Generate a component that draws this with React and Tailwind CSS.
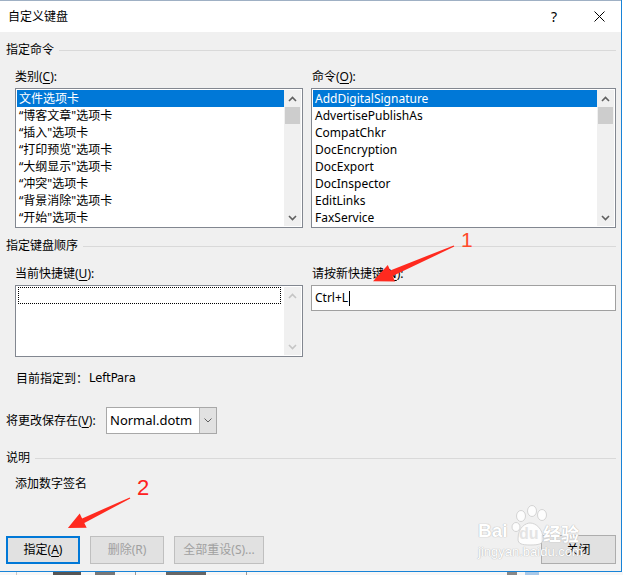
import React from "react";

const FONT = { fontFamily: '"Noto Sans", "Noto Sans CJK SC", sans-serif' };

function Chevron({ dir = "up", color = "#606060" }) {
  return (
    <svg width="9" height="6" viewBox="0 0 9 6">
      <path
        d={dir === "up" ? "M1 5 L4.5 1.5 L8 5" : "M1 1 L4.5 4.5 L8 1"}
        fill="none"
        stroke={color}
        strokeWidth="1.6"
      />
    </svg>
  );
}

function Scrollbar({ thumb, disabled }) {
  const c = disabled ? "#c5c5c5" : "#606060";
  return (
    <div className="w-[17px] h-full bg-[#f0f0f0] flex flex-col shrink-0">
      <div className="h-[17px] flex items-center justify-center">
        <Chevron dir="up" color={c} />
      </div>
      {thumb ? <div className="h-[17px] mx-[1px] bg-[#cdcdcd]" /> : null}
      <div className="flex-1" />
      <div className="h-[17px] flex items-center justify-center">
        <Chevron dir="down" color={c} />
      </div>
    </div>
  );
}

function ListBox({ items, widthClass }) {
  return (
    <div className={"h-[140px] border border-[#828790] bg-white p-[1px] flex " + widthClass}>
      <div className="flex-1 flex flex-col overflow-hidden">
        {items.map((t, i) => (
          <div
            key={i}
            className={
              "h-[17px] leading-[17px] pl-[2px] whitespace-nowrap text-[12px] " +
              (i === 0 ? "bg-[#0078d7] text-white" : "text-black")
            }
          >
            {t}
          </div>
        ))}
      </div>
      <Scrollbar thumb />
    </div>
  );
}

function GroupHeader({ label, className = "" }) {
  return (
    <div className={"flex items-center h-[18px] " + className}>
      <span className="pl-[6px] pr-[5px] leading-[18px] text-[12px] whitespace-nowrap">{label}</span>
      <div className="flex-1 h-px bg-[#d9d9d9] mr-[5px]" />
    </div>
  );
}

const U = ({ children }) => <span className="underline underline-offset-2">{children}</span>;

export default function App() {
  const cats = [
    "文件选项卡",
    "“博客文章\"选项卡",
    "“插入\"选项卡",
    "“打印预览\"选项卡",
    "“大纲显示\"选项卡",
    "“冲突\"选项卡",
    "“背景消除\"选项卡",
    "“开始\"选项卡",
  ];
  const cmds = [
    "AddDigitalSignature",
    "AdvertisePublishAs",
    "CompatChkr",
    "DocEncryption",
    "DocExport",
    "DocInspector",
    "EditLinks",
    "FaxService",
  ];

  return (
    <div className="relative w-[623px] h-[575px] bg-white overflow-hidden text-black" style={FONT}>
      <div className="w-[622px] h-[572px] flex flex-col border-r border-b border-[#1883d7]">
        {/* Title bar */}
        <div className="h-[32px] shrink-0 bg-white border-t border-[#9fb0c4] flex items-center">
          <span className="pl-[8px] text-[12px]">自定义键盘</span>
          <div className="ml-auto flex items-center mr-[16px]">
            <span className="text-[14px] leading-none">?</span>
            <svg className="ml-[37px]" width="11" height="11" viewBox="0 0 11 11">
              <path d="M0.5 0.5 L10.5 10.5 M10.5 0.5 L0.5 10.5" stroke="#000" strokeWidth="1" />
            </svg>
          </div>
        </div>

        {/* Body */}
        <div className="flex-1 bg-[#f0f0f0] flex flex-col pt-[9px]">
          <GroupHeader label="指定命令" />

          <div className="flex mt-[9px] pl-[15px]">
            <div className="w-[288px] flex flex-col">
              <div className="h-[17px] leading-[17px] text-[12px]">
                类别(<U>C</U>):
              </div>
              <div className="mt-[3px]">
                <ListBox items={cats} widthClass="w-[288px]" />
              </div>
            </div>
            <div className="w-[305px] ml-[8px] flex flex-col">
              <div className="h-[17px] leading-[17px] text-[12px] pl-[1px]">
                命令(<U>O</U>):
              </div>
              <div className="mt-[3px]">
                <ListBox items={cmds} widthClass="w-[305px]" />
              </div>
            </div>
          </div>

          <GroupHeader label="指定键盘顺序" className="mt-[9px]" />

          <div className="flex mt-[10px] pl-[15px]">
            <div className="w-[288px] flex flex-col">
              <div className="h-[17px] leading-[17px] text-[12px]">
                当前快捷键(<U>U</U>):
              </div>
              <div className="mt-[3px] h-[72px] border border-[#828790] bg-white p-[1px] flex">
                <div className="flex-1 pr-[3px]">
                  <div className="h-[17px] border border-dotted border-black ml-[1px]" />
                </div>
                <Scrollbar disabled />
              </div>
            </div>
            <div className="w-[305px] ml-[8px] flex flex-col">
              <div className="h-[17px] leading-[17px] text-[12px] pl-[1px]">
                请按新快捷键(<U>N</U>):
              </div>
              <div className="mt-[3px] h-[26px] border border-[#a0a0a0] bg-white flex items-center pl-[3px] text-[12px]">
                <span>Ctrl+L</span>
                <span className="inline-block w-px h-[15px] bg-black ml-[1px]" />
              </div>
            </div>
          </div>

          <div className="mt-[13px] h-[17px] leading-[17px] pl-[16px] text-[12px] flex">
            <span>目前指定到：</span>
            <span className="ml-[1px]" style={{ fontFamily: '"DejaVu Sans", sans-serif', fontSize: "11.5px" }}>
              LeftPara
            </span>
          </div>

          <div className="mt-[20px] flex items-center pl-[6px]">
            <div className="w-[100px] text-[12px] whitespace-nowrap">
              将更改保存在(<U>V</U>):
            </div>
            <div className="w-[111px] h-[27px] border border-[#a8a8a8] bg-white flex">
              <div className="flex-1 flex items-center pl-[3px] text-[13px]">Normal.dotm</div>
              <div className="w-[17px] bg-[#e1e1e1] border-l border-[#b8b8b8] flex items-center justify-center">
                <svg width="8" height="5" viewBox="0 0 8 5">
                  <path d="M0.5 0.5 L4 4 L7.5 0.5" fill="none" stroke="#606060" strokeWidth="1" />
                </svg>
              </div>
            </div>
          </div>

          <GroupHeader label="说明" className="mt-[15px]" />

          <div className="mt-[8px] h-[17px] leading-[17px] pl-[15px] text-[12px]">添加数字签名</div>

          <div className="mt-[43px] flex items-end pl-[6px] pr-[5px]">
            <div className="w-[74px] h-[28px] border-2 border-[#0078d7] bg-[#e1e1e1] flex items-center justify-center text-[12px]">
              指定(<U>A</U>)
            </div>
            <div className="ml-[10px] w-[74px] h-[28px] border border-[#bfbfbf] bg-[#e1e1e1] flex items-center justify-center text-[12px] text-[#a0a0a0]">
              删除(R)
            </div>
            <div className="ml-[10px] w-[90px] h-[28px] border border-[#bfbfbf] bg-[#e1e1e1] flex items-center justify-center text-[12px] text-[#a0a0a0]">
              全部重设(S)...
            </div>
            <div className="ml-auto w-[75px] h-[29px] border border-[#adadad] bg-[#e1e1e1] flex items-center justify-center text-[12px]">
              关闭
            </div>
          </div>
        </div>
      </div>

      {/* strip of background below dialog */}
      <div className="h-[3px] w-full bg-[#f7f7f7] flex">
        <div className="ml-[16px] w-px bg-[#c8c8c8]" />
        <div className="ml-[36px] w-[28px] bg-[#555]" />
        <div className="ml-[14px] w-[20px] bg-[#777]" />
        <div className="ml-[20px] w-px bg-[#999]" />
        <div className="ml-[30px] w-[40px] bg-[#666]" />
        <div className="ml-[40px] w-px bg-[#999]" />
        <div className="ml-[260px] w-[10px] bg-[#888]" />
        <div className="ml-[8px] w-[14px] bg-[#a8c8e8]" />
      </div>

      {/* Baidu watermark */}
      <div className="absolute left-[476px] top-[503px] w-[120px] h-[60px] pointer-events-none">
        <svg className="absolute left-0 top-0" width="120" height="60" viewBox="0 0 120 60">
          <g fill="#ffffff" fillOpacity="0.85" stroke="#d4d4d4" strokeWidth="1">
            <ellipse cx="45" cy="13" rx="4.5" ry="5.5" />
            <ellipse cx="56" cy="8" rx="4.5" ry="5.5" />
            <ellipse cx="66" cy="12" rx="4.5" ry="5.5" />
            <ellipse cx="40" cy="24" rx="4" ry="4.5" />
            <path d="M42 36 C42 24 50 20 54 20 C60 20 67 26 67 36 C67 41 63 42 54 42 C46 42 42 41 42 36 Z" />
          </g>
        </svg>
        <div
          className="absolute left-[2px] top-[18px] text-[19px] font-bold leading-none text-white"
          style={{ fontFamily: '"Liberation Sans", Arial, sans-serif', textShadow: "0 0 1px #b8b8b8, 0 0 1px #b8b8b8" }}
        >
          Bai
        </div>
        <div
          className="absolute left-[43px] top-[23px] text-[16px] font-bold leading-none text-[#e4e4e4]"
          style={{ fontFamily: '"Liberation Sans", Arial, sans-serif' }}
        >
          du
        </div>
        <div
          className="absolute left-[67px] top-[21px] text-[18px] font-bold leading-none text-white"
          style={{ fontFamily: '"Noto Sans CJK SC", sans-serif', textShadow: "0 0 1px #b8b8b8, 0 0 1px #b8b8b8" }}
        >
          经验
        </div>
        <div
          className="absolute left-[2px] top-[42px] text-[13px] leading-none text-white whitespace-nowrap"
          style={{ fontFamily: '"Liberation Sans", Arial, sans-serif', textShadow: "0 0 1px #b8b8b8, 0 0 1px #b8b8b8" }}
        >
          jingyan.baidu.com
        </div>
      </div>

      {/* Red arrows */}
      <svg className="absolute left-0 top-0 pointer-events-none" width="623" height="575" viewBox="0 0 623 575">
        <polygon
          fill="#ff2a1f"
          points="454.3,246.6 392.6,276 395,281.5 373,281.2 387.8,264.9 390.2,270.4 453.7,245.4"
        />
        <polygon
          fill="#ff2a1f"
          points="130.3,498.5 84.3,522.9 86.7,527.8 67.9,528 79.7,513.4 82.1,518.4 129.7,497.5"
        />
      </svg>
      <div
        className="absolute left-[461px] top-[229px] text-[21px] leading-none text-[#ff4a2a] pointer-events-none"
        style={{ fontFamily: '"Liberation Sans", Arial, sans-serif' }}
      >
        1
      </div>
      <div
        className="absolute left-[137px] top-[477px] text-[22px] leading-none text-[#ff2020] pointer-events-none"
        style={{ fontFamily: '"Liberation Sans", Arial, sans-serif' }}
      >
        2
      </div>
    </div>
  );
}
